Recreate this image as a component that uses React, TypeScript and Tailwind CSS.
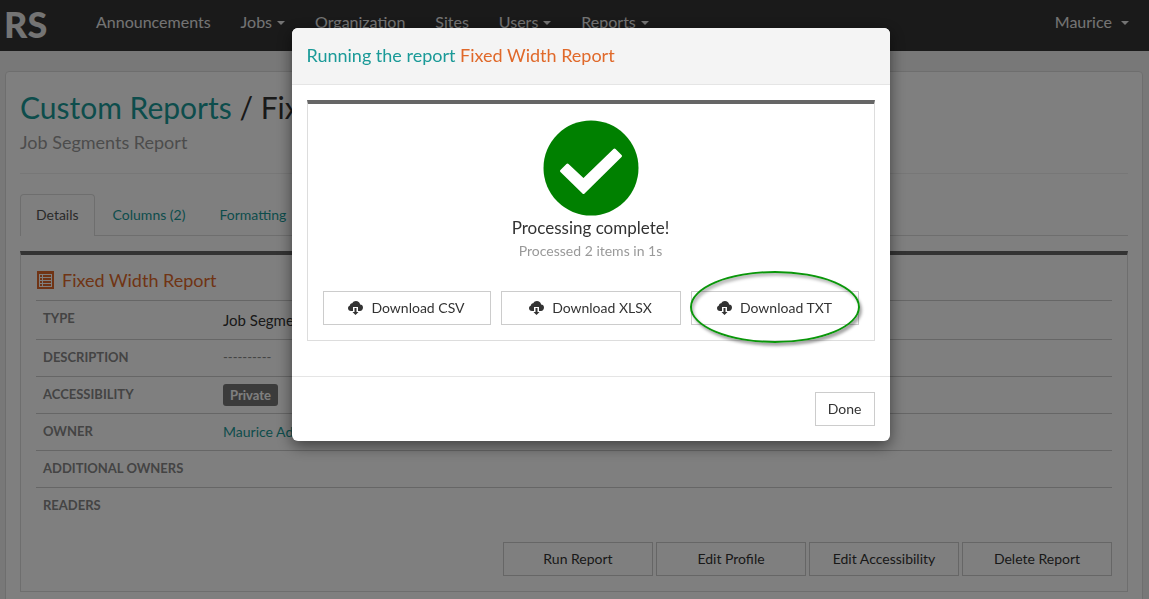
import type { ReactNode } from 'react';

const navLinks = [
  { label: 'Announcements', menu: false },
  { label: 'Jobs', menu: true },
  { label: 'Organization', menu: false },
  { label: 'Sites', menu: false },
  { label: 'Users', menu: true },
  { label: 'Reports', menu: true },
];

const rows: { label: string; value?: ReactNode }[] = [
  { label: 'TYPE', value: <span className="text-[15px] leading-[38px] text-[#333]">Job Segments Report</span> },
  { label: 'DESCRIPTION', value: '----------' },
  {
    label: 'ACCESSIBILITY',
    value: <span className="inline-block rounded-[3px] bg-[#777] px-[7px] text-[13px] leading-[22px] font-bold text-white">Private</span>,
  },
  { label: 'OWNER', value: <a href="#owner" className="text-sm text-[#1a9a98]">Maurice Adams</a> },
  { label: 'ADDITIONAL OWNERS' },
  { label: 'READERS' },
];

const actions = ['Run Report', 'Edit Profile', 'Edit Accessibility', 'Delete Report'];

function Caret() {
  return <span className="ml-[5px] inline-block border-x-4 border-t-4 border-x-transparent border-t-current align-middle" />;
}

function ListIcon() {
  return (
    <svg viewBox="0 0 17 18" className="h-[18px] w-[17px]" fill="currentColor" aria-hidden="true">
      <path fillRule="evenodd" d="M0 0h17v18H0zM2 3v13h13V3z" />
      <path d="M3 4h2v2H3zM6 4h8v2H6zM3 7h2v2H3zM6 7h8v2H6zM3 10h2v2H3zM6 10h8v2H6zM3 13h2v2H3zM6 13h8v2H6z" />
    </svg>
  );
}

function CloudDownload() {
  return (
    <svg viewBox="0 0 15 14" className="h-[14px] w-[15px]" fill="currentColor" aria-hidden="true">
      <path d="M3 10C1.200 10 0 8.800 0 7.200 0 5.900.8 4.900 1.900 4.500 1.900 3 3 2 4.300 2.200 5 .8 6.300 0 7.900 0c2.200 0 3.900 1.500 4.200 3.500C13.800 3.500 15 4.800 15 6.600 15 8.500 13.700 10 12 10H10V6H5v4z" />
      <path d="M6.500 7h2v4h2L7.500 14l-3-3h2z" />
    </svg>
  );
}

function DownloadButton({ format, className }: { format: string; className: string }) {
  return (
    <button className={`flex h-[34px] items-center justify-center gap-2 border border-[#ccc] bg-white text-sm text-[#333] ${className}`}>
      <CloudDownload />
      Download {format}
    </button>
  );
}

function Navbar() {
  return (
    <nav className="flex h-[51px] items-center bg-[#343434] pr-5 text-base text-[#e8e8e8]">
      <a href="#home" className="w-20 pb-1 pl-1 text-[36px] leading-none font-black">RS</a>
      <div className="flex flex-1 gap-[30px] pb-2 pl-4">
        {navLinks.map((link) => (
          <a key={link.label} href="#nav">
            {link.label}
            {link.menu && <Caret />}
          </a>
        ))}
      </div>
      <a href="#account" className="pb-2">
        Maurice <Caret />
      </a>
    </nav>
  );
}

function ReportPage() {
  return (
    <main className="mr-[6px] ml-[5px] mt-5 rounded border border-[#ddd] bg-white px-[14px] pt-[17px] pb-10">
      <h1 className="text-[30px] leading-9 whitespace-nowrap text-[#333]">
        <a href="#reports" className="text-[#1a9a98]">Custom Reports</a> / Fixed Width Report
      </h1>
      <p className="mt-[3px] text-lg leading-7 text-[#999]">Job Segments Report</p>

      <div className="mt-[17px] flex border-t border-[#eee] pt-5">
        <div className="flex flex-1 border-b border-[#ddd] text-sm">
          <a href="#details" className="-mb-px rounded-t border border-b-0 border-[#ddd] bg-white px-[15px] pt-[10px] pb-[11px] text-[#555]">Details</a>
          <a href="#columns" className="mt-px ml-0.5 px-4 py-[10px] text-[#1a9a98]">Columns (2)</a>
          <a href="#formatting" className="mt-px ml-0.5 px-4 py-[10px] text-[#1a9a98]">Formatting</a>
        </div>
      </div>

      <section className="mt-[15px] border border-t-4 border-[#ddd] border-t-[#666] px-[15px] pt-2 pb-[15px]">
        <h2 className="flex h-[37px] items-center gap-2 pb-1 pl-px text-lg text-[#e0692a]">
          <ListIcon />
          Fixed Width Report
        </h2>
        <table className="w-full text-[13px] text-[#888]">
          <tbody>
            {rows.map((row) => (
              <tr key={row.label} className="h-[37px] border-t border-[#ccc]">
                <th scope="row" className="w-[180px] px-[7px] py-2 text-left align-top font-bold">{row.label}</th>
                <td className="px-[7px] py-0">{row.value}</td>
              </tr>
            ))}
          </tbody>
        </table>
        <div className="mt-[17px] flex justify-end gap-[3px]">
          {actions.map((action) => (
            <button key={action} className="h-[34px] w-[150px] border border-[#ccc] text-sm text-[#333]">{action}</button>
          ))}
        </div>
      </section>
    </main>
  );
}

function ReportDialog() {
  return (
    <div role="dialog" aria-modal="true" aria-labelledby="dialog-title" className="w-full max-w-[598px] overflow-hidden rounded-md bg-white text-[#333] shadow-[0_5px_15px_rgba(0,0,0,0.5)]">
      <header className="border-b border-[#e5e5e5] bg-[#f4f4f4] px-[15px] pt-[13px] pb-[15px]">
        <h2 id="dialog-title" className="text-lg leading-7 text-[#1a9a98]">
          Running the report <span className="text-[#e0692a]">Fixed Width Report</span>
        </h2>
      </header>
      <div className="px-[15px] pt-[15px] pb-[35px]">
        <section className="border border-t-4 border-[#ddd] border-t-[#666] px-[15px] pt-4 pb-[15px] text-center">
          <svg viewBox="0 0 96 96" className="mx-auto h-24 w-24" aria-hidden="true">
            <circle cx="48" cy="48" r="47.500" fill="#008000" />
            <path d="M18.500 51 24.500 45 40.500 60 71.500 30 77.500 36 40.500 72.500Z" fill="#fff" stroke="#fff" strokeWidth="3" strokeLinejoin="round" />
          </svg>
          <p className="text-[17px] leading-6">Processing complete!</p>
          <p className="text-sm leading-[22px] text-[#999]">Processed 2 items in 1s</p>
          <div className="mt-[29px] flex gap-[10px]">
            <DownloadButton format="CSV" className="w-[168px]" />
            <DownloadButton format="XLSX" className="flex-1" />
            <div className="relative">
              <DownloadButton format="TXT" className="w-[168px]" />
              <span className="pointer-events-none absolute -inset-x-px -top-5 h-[72px] rounded-[50%] border-2 border-[#0a960a] shadow-[2px_3px_3px_rgba(0,0,0,0.35),inset_2px_3px_3px_rgba(0,0,0,0.25)]" />
            </div>
          </div>
        </section>
      </div>
      <footer className="flex justify-end border-t border-[#e5e5e5] p-[15px]">
        <button className="h-[34px] border border-[#ccc] px-3 text-sm">Done</button>
      </footer>
    </div>
  );
}

export default function App() {
  return (
    <div className="h-screen overflow-hidden bg-[#f0f0f0] font-[Lato,sans-serif]">
      <Navbar />
      <ReportPage />
      <div className="fixed inset-0 flex items-start justify-center overflow-hidden bg-black/50 pt-7 pr-4 pl-12">
        <ReportDialog />
      </div>
    </div>
  );
}
